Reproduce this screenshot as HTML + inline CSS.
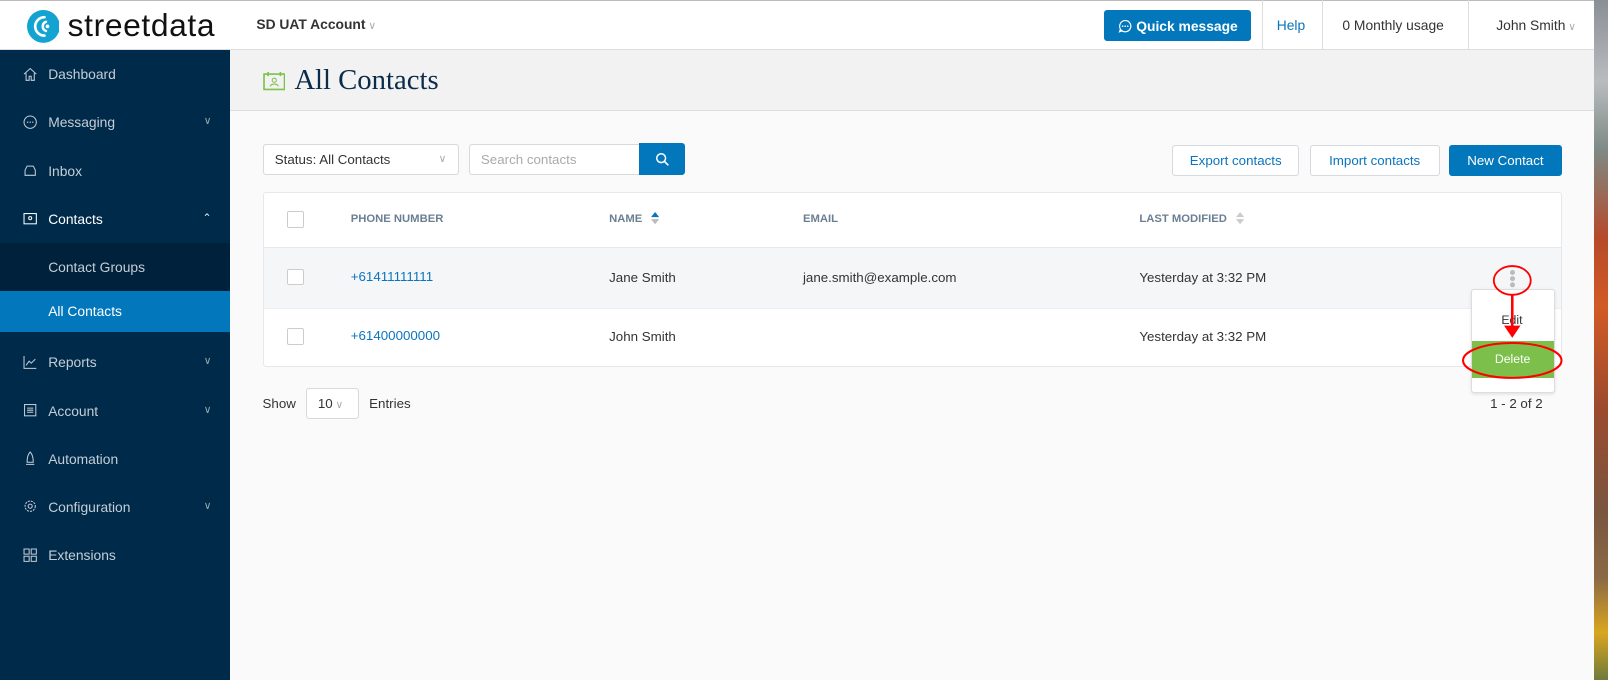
<!DOCTYPE html>
<html><head><meta charset="utf-8"><style>
*{box-sizing:border-box;margin:0;padding:0}
html,body{width:1608px;height:680px;overflow:hidden;background:#fafafa}
#w{zoom:1.02551;position:relative;width:1568px;height:663px;font-family:"Liberation Sans",sans-serif;font-size:13px;color:#333}
.a{position:absolute}
.hdr{left:0;top:0;width:1554px;height:49px;background:#fff;border-top:1px solid #bbb;border-bottom:1px solid #ddd}
.side{left:0;top:49px;width:224px;height:614px;background:#002a4a}
.ni{position:absolute;left:0;width:224px;height:47px;color:#c4cdd6;font-size:13.5px;line-height:47px;padding-left:47px}
.ni svg{position:absolute;left:22px;top:16px}
.ni .ch{position:absolute;right:18px;top:0;font-size:10px;color:#9aa}
.photo{left:1554px;top:0;width:14px;height:663px;background:linear-gradient(#8a8f96 0%,#b9bcbf 12%,#7e8a84 22%,#b54a2a 35%,#d25a25 45%,#9c4a2e 60%,#7a5540 75%,#8b6a45 85%,#d9a620 93%,#6f7a3a 100%)}
.btn{position:absolute;height:31px;border:1px solid #d6d9dd;border-radius:3px;background:#fff;color:#0a74bf;font-size:13px;line-height:29px;text-align:center}
.btnp{background:#0377bb;border-color:#0377bb;color:#fff}
.cb{position:absolute;width:16px;height:16px;border:1px solid #ccc;border-radius:2px;background:#fff}
.th{position:absolute;font-size:11px;font-weight:bold;color:#6b7f93;letter-spacing:0}
.td{position:absolute;font-size:13px;color:#333}
.lnk{color:#0a74bf}
</style></head><body><div id="w">
<div class="a hdr"></div>
<svg class="a" style="left:26px;top:10px" width="32" height="32" viewBox="0 0 32 32"><circle cx="16" cy="16" r="16" fill="#12a3d1"/><path d="M17 7 A9 9 0 0 0 17 25" stroke="#fff" stroke-width="2.6" fill="none" stroke-linecap="round"/><path d="M18.5 11.5 A4.8 4.8 0 0 0 18.5 20.5" stroke="#fff" stroke-width="2.4" fill="none" stroke-linecap="round"/><circle cx="20" cy="16" r="1.8" fill="#fff"/></svg>
<div class="a" style="left:66px;top:7px;font-size:31px;color:#111;letter-spacing:0.6px">streetdata</div>
<div class="a" style="left:250px;top:16px;font-size:13.5px;font-weight:bold;color:#333">SD UAT Account<span style="color:#aaa;font-weight:normal;font-size:10px"> ∨</span></div>
<div class="btn btnp" style="left:1077px;top:10px;width:143px;height:30px;line-height:30px;font-weight:bold;font-size:13.5px"><svg width="14" height="14" style="vertical-align:-2px;margin-right:4px" viewBox="0 0 14 14"><path d="M7 1.5a5.5 5.5 0 1 1-4.6 8.5L1.5 12.5l2.6-.9A5.5 5.5 0 0 1 7 1.5z" stroke="#fff" fill="none" stroke-width="1.2"/><circle cx="4.5" cy="7" r=".8" fill="#fff"/><circle cx="7" cy="7" r=".8" fill="#fff"/><circle cx="9.5" cy="7" r=".8" fill="#fff"/></svg>Quick message</div>
<div class="a" style="left:1231px;top:0;height:49px;border-left:1px solid #ddd"></div>
<div class="a" style="left:1289px;top:0;height:49px;border-left:1px solid #ddd"></div>
<div class="a" style="left:1431px;top:0;height:49px;border-left:1px solid #ddd"></div>
<div class="a lnk" style="left:1245px;top:17px;font-size:13.5px">Help</div>
<div class="a" style="left:1309px;top:17px;font-size:13.5px">0 Monthly usage</div>
<div class="a" style="left:1459px;top:17px;font-size:13.5px">John Smith<span style="color:#aaa;font-size:10px"> ∨</span></div>
<div class="a photo"></div>
<div class="a side">
<div class="ni" style="top:0">Dashboard<svg width="14" height="14" viewBox="0 0 14 14"><path d="M1 7L7 1.5 13 7M3 6v7h3V9h2v4h3V6" stroke="#c4cdd6" fill="none"/></svg></div>
<div class="ni" style="top:47px">Messaging<svg width="14" height="14"><circle cx="7" cy="7" r="6" stroke="#c4cdd6" fill="none"/><circle cx="4.5" cy="7" r=".7" fill="#c4cdd6"/><circle cx="7" cy="7" r=".7" fill="#c4cdd6"/><circle cx="9.5" cy="7" r=".7" fill="#c4cdd6"/></svg><span class="ch">∨</span></div>
<div class="ni" style="top:94px">Inbox<svg width="14" height="14"><path d="M2 7l2-4h6l2 4v5H2z" stroke="#c4cdd6" fill="none"/></svg></div>
<div class="ni" style="top:141px;color:#fff">Contacts<svg width="14" height="14"><rect x="1" y="2.5" width="12" height="10" stroke="#fff" fill="none"/><circle cx="7" cy="7" r="1.5" stroke="#fff" fill="none"/></svg><span class="ch" style="color:#fff">⌃</span></div>
<div class="ni" style="top:188px;background:#00213b">Contact Groups</div>
<div class="ni" style="top:235px;background:#0377bb;color:#fff;height:40px;line-height:40px">All Contacts</div>
<div class="ni" style="top:281px">Reports<svg width="14" height="14"><path d="M1 1v12h12M3 10l3-4 2 2 4-4" stroke="#c4cdd6" fill="none"/></svg><span class="ch">∨</span></div>
<div class="ni" style="top:328px">Account<svg width="14" height="14"><rect x="1.5" y="1.5" width="11" height="11" stroke="#c4cdd6" fill="none"/><path d="M4 5h6M4 7h6M4 9h6" stroke="#c4cdd6"/></svg><span class="ch">∨</span></div>
<div class="ni" style="top:375px">Automation<svg width="14" height="14"><path d="M7 1C4 4 4 9 4 11h6c0-2 0-7-3-10zM3 13h8" stroke="#c4cdd6" fill="none"/></svg></div>
<div class="ni" style="top:422px">Configuration<svg width="14" height="14"><circle cx="7" cy="7" r="5" stroke="#c4cdd6" fill="none" stroke-dasharray="2 1"/><circle cx="7" cy="7" r="2" stroke="#c4cdd6" fill="none"/></svg><span class="ch">∨</span></div>
<div class="ni" style="top:469px">Extensions<svg width="14" height="14"><path d="M1 1h5v5H1zM8 1h5v5H8zM1 8h5v5H1zM8 8h5v5H8z" stroke="#c4cdd6" fill="none"/></svg></div>
</div>
<div class="a" style="left:224px;top:49px;width:1330px;height:59px;background:#f2f2f2;border-bottom:1px solid #ddd"></div>
<svg class="a" style="left:256px;top:69px" width="22" height="20" viewBox="0 0 22 20"><rect x="1" y="3" width="20" height="15" stroke="#7dc24b" stroke-width="1.6" fill="none"/><path d="M5 1v4M17 1v4" stroke="#7dc24b" stroke-width="1.6"/><circle cx="11" cy="9" r="2" stroke="#7dc24b" fill="none"/><path d="M7 15c1-3 7-3 8 0" stroke="#7dc24b" fill="none"/></svg>
<div class="a" style="left:287px;top:62px;font-family:'Liberation Serif',serif;font-size:28px;color:#0b2b4a">All Contacts</div>
<div class="btn" style="left:256px;top:140px;width:192px;height:31px;color:#333;text-align:left;padding-left:11px">Status: All Contacts<span style="position:absolute;right:12px;color:#aaa;font-size:10px">∨</span></div>
<div class="btn" style="left:457px;top:140px;width:170px;height:31px;color:#aaa;text-align:left;padding-left:11px;border-radius:3px 0 0 3px">Search contacts</div>
<div class="btn btnp" style="left:623px;top:139px;width:45px;height:32px;border-radius:0 3px 3px 0"><svg width="14" height="14" style="margin-top:8px"><circle cx="6" cy="6" r="4.3" stroke="#fff" stroke-width="1.5" fill="none"/><path d="M9 9l4 4" stroke="#fff" stroke-width="1.6"/></svg></div>
<div class="btn" style="left:1143px;top:141px;width:124px">Export contacts</div>
<div class="btn" style="left:1277px;top:141px;width:127px">Import contacts</div>
<div class="btn btnp" style="left:1413px;top:141px;width:110px">New Contact</div>
<div class="a" style="left:256px;top:187px;width:1267px;height:171px;background:#fff;border:1px solid #e6e8ec;border-radius:3px"></div>
<div class="a" style="left:257px;top:241px;width:1265px;height:59px;background:#f5f6f8;border-top:1px solid #e6e8ec"></div>
<div class="a" style="left:257px;top:300px;width:1265px;border-top:1px solid #eceef2"></div>
<div class="cb" style="left:280px;top:206px"></div>
<div class="th" style="left:342px;top:208px">PHONE NUMBER</div>
<div class="th" style="left:594px;top:208px">NAME</div>
<svg class="a" style="left:635px;top:207px" width="8" height="12"><path d="M0 5L4 0 8 5z" fill="#0a74bf"/><path d="M0 7L4 12 8 7z" fill="#bbb"/></svg>
<div class="th" style="left:783px;top:208px">EMAIL</div>
<div class="th" style="left:1111px;top:208px">LAST MODIFIED</div>
<svg class="a" style="left:1205px;top:207px" width="8" height="12"><path d="M0 5L4 0 8 5z" fill="#ccc"/><path d="M0 7L4 12 8 7z" fill="#ccc"/></svg>
<div class="cb" style="left:280px;top:262px"></div>
<div class="td lnk" style="left:342px;top:262px">+61411111111</div>
<div class="td" style="left:594px;top:263px">Jane Smith</div>
<div class="td" style="left:783px;top:263px">jane.smith@example.com</div>
<div class="td" style="left:1111px;top:263px">Yesterday at 3:32 PM</div>
<div class="cb" style="left:280px;top:320px"></div>
<div class="td lnk" style="left:342px;top:320px">+61400000000</div>
<div class="td" style="left:594px;top:321px">John Smith</div>
<div class="td" style="left:1111px;top:321px">Yesterday at 3:32 PM</div>
<div class="a" style="left:1434px;top:282px;width:82px;height:101px;background:#fff;border:1px solid #ddd;border-radius:3px;box-shadow:0 1px 3px rgba(0,0,0,.1)"></div>
<div class="a" style="left:1464px;top:305px;font-size:12px;color:#333">Edit</div>
<div class="a" style="left:1435px;top:333px;width:80px;height:36px;background:#7cc04b;color:#fff;font-size:12px;text-align:center;line-height:36px">Delete</div>
<div class="a" style="left:1472px;top:263px;width:5px;height:5px;border-radius:50%;background:#bbb;box-shadow:0 6px 0 #bbb,0 12px 0 #bbb"></div>
<svg class="a" style="left:1425px;top:255px" width="110" height="120" viewBox="0 0 110 120"><ellipse cx="50" cy="18" rx="18" ry="14" stroke="#f00" stroke-width="1.8" fill="none"/><path d="M50 32v38" stroke="#f00" stroke-width="2.5"/><path d="M42 62l8 12 8-12z" fill="#f00"/><ellipse cx="50" cy="96" rx="48" ry="17" stroke="#f00" stroke-width="2" fill="none"/></svg>
<div class="a" style="left:1453px;top:386px;font-size:13px">1 - 2 of 2</div>
<div class="a" style="left:256px;top:386px;font-size:13px">Show</div>
<div class="btn" style="left:298px;top:378px;width:52px;color:#333;text-align:left;padding-left:11px">10<span style="color:#aaa;font-size:10px"> ∨</span></div>
<div class="a" style="left:360px;top:386px;font-size:13px">Entries</div>
</div></body></html>
